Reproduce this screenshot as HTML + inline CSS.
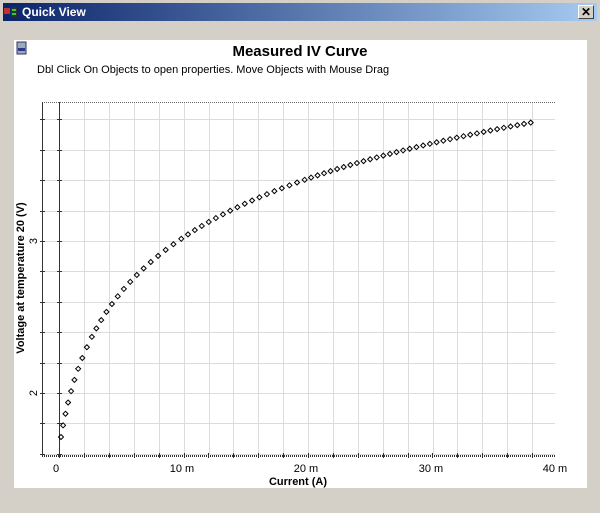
<!DOCTYPE html>
<html><head><meta charset="utf-8"><style>
body{margin:0;width:600px;height:513px;background:#d4d0c8;font-family:"Liberation Sans",sans-serif;position:relative;overflow:hidden}
.tb{position:absolute;left:3px;top:3px;width:594px;height:18px;background:linear-gradient(90deg,#0a246a,#a6caf0)}
.tb span{position:absolute;left:19px;top:2px;color:#fff;font-weight:bold;font-size:12px}
.x{position:absolute;left:578px;top:5px;width:14px;height:12px;background:#d4d0c8;border:1px solid;border-color:#fff #404040 #404040 #fff;font-size:12px;font-weight:bold;line-height:12px;text-align:center}
.panel{position:absolute;left:14px;top:40px;width:573px;height:448px;background:#fff}
</style></head><body>
<div class="tb"><svg width="16" height="14" style="position:absolute;left:1px;top:2px"><rect x="0" y="3" width="6" height="6" fill="#c03030"/><rect x="7" y="2" width="6" height="10" fill="#303030"/><rect x="8" y="4" width="4" height="2" fill="#3c3"/><rect x="8" y="8" width="4" height="2" fill="#3c3"/></svg><span>Quick View</span></div>
<div class="x">✕</div>
<div class="panel"></div>
<svg width="600" height="513" style="position:absolute;left:0;top:0" id="s" font-family="Liberation Sans, sans-serif">
<rect x="17" y="42" width="9" height="12" fill="#9ab" stroke="#336"/><rect x="18" y="48" width="7" height="3" fill="#2a3a8a"/>
<text x="300" y="56" font-size="15" font-weight="bold" text-anchor="middle">Measured IV Curve</text>
<text x="37" y="73" font-size="11">Dbl Click On Objects to open properties.  Move Objects with Mouse Drag</text>
<g id="grid" stroke="#dcdcdc" stroke-width="1"></g>
<line x1="42" y1="102.5" x2="555" y2="102.5" stroke="#666" stroke-dasharray="1,1"/>
<line x1="42" y1="456" x2="555" y2="456" stroke="#333" stroke-width="2" stroke-dasharray="1,1"/>
<line x1="42.5" y1="102" x2="42.5" y2="457" stroke="#333"/>
<line x1="59.5" y1="102" x2="59.5" y2="457" stroke="#333"/>
<g id="ticks" stroke="#333"></g>
<g font-size="11" text-anchor="middle">
<text x="56" y="472">0</text><text x="182" y="472">10 m</text><text x="306" y="472">20 m</text><text x="431" y="472">30 m</text><text x="555" y="472">40 m</text>
<text transform="translate(37,241) rotate(-90)">3</text>
<text transform="translate(37,393) rotate(-90)">2</text>
</g>
<text x="298" y="485" font-size="11" font-weight="bold" text-anchor="middle">Current (A)</text>
<text transform="translate(24,278) rotate(-90)" font-size="11" font-weight="bold" text-anchor="middle">Voltage at temperature 20 (V)</text>
<g id="pts" fill="none" stroke="#000" stroke-width="1"></g>
</svg>
<script>
var ns="http://www.w3.org/2000/svg";
function el(p,t,a){var e=document.createElementNS(ns,t);for(var k in a)e.setAttribute(k,a[k]);document.getElementById(p).appendChild(e);}
for(var x=59+25;x<555;x+=24.9)el("grid","line",{x1:Math.round(x)+.5,y1:103,x2:Math.round(x)+.5,y2:455});
for(var v=1.6;v<3.95;v+=0.2){var y=Math.round(241-(v-3)*152)+.5;if(y>103&&y<455){el("grid","line",{x1:43,y1:y,x2:555,y2:y});el("ticks","line",{x1:40,y1:y,x2:45,y2:y});el("ticks","line",{x1:57,y1:y,x2:62,y2:y});}}
for(var x=59;x<556;x+=24.9)el("ticks","line",{x1:Math.round(x)+.5,y1:453,x2:Math.round(x)+.5,y2:458});
function pos(i){var V=3.02+0.6*Math.log((i+1.0)/11);return [58+i*12.45,241-(V-3)*152];}
function dot(p){var cx=p[0],cy=p[1];el("pts","path",{d:"M"+cx+" "+(cy-2.5)+"L"+(cx+2.5)+" "+cy+"L"+cx+" "+(cy+2.5)+"L"+(cx-2.5)+" "+cy+"Z"});}
var i=0.24,last=pos(i);dot(last);
while(i<38.5){i+=0.01;var p=pos(i);var d=Math.hypot(p[0]-last[0],p[1]-last[1]);var step=last[0]>300?6.8:(last[0]>180?8:(last[0]>90?9.5:11.5));if(d>=step){dot(p);last=p;}}
</script>
</body></html>
